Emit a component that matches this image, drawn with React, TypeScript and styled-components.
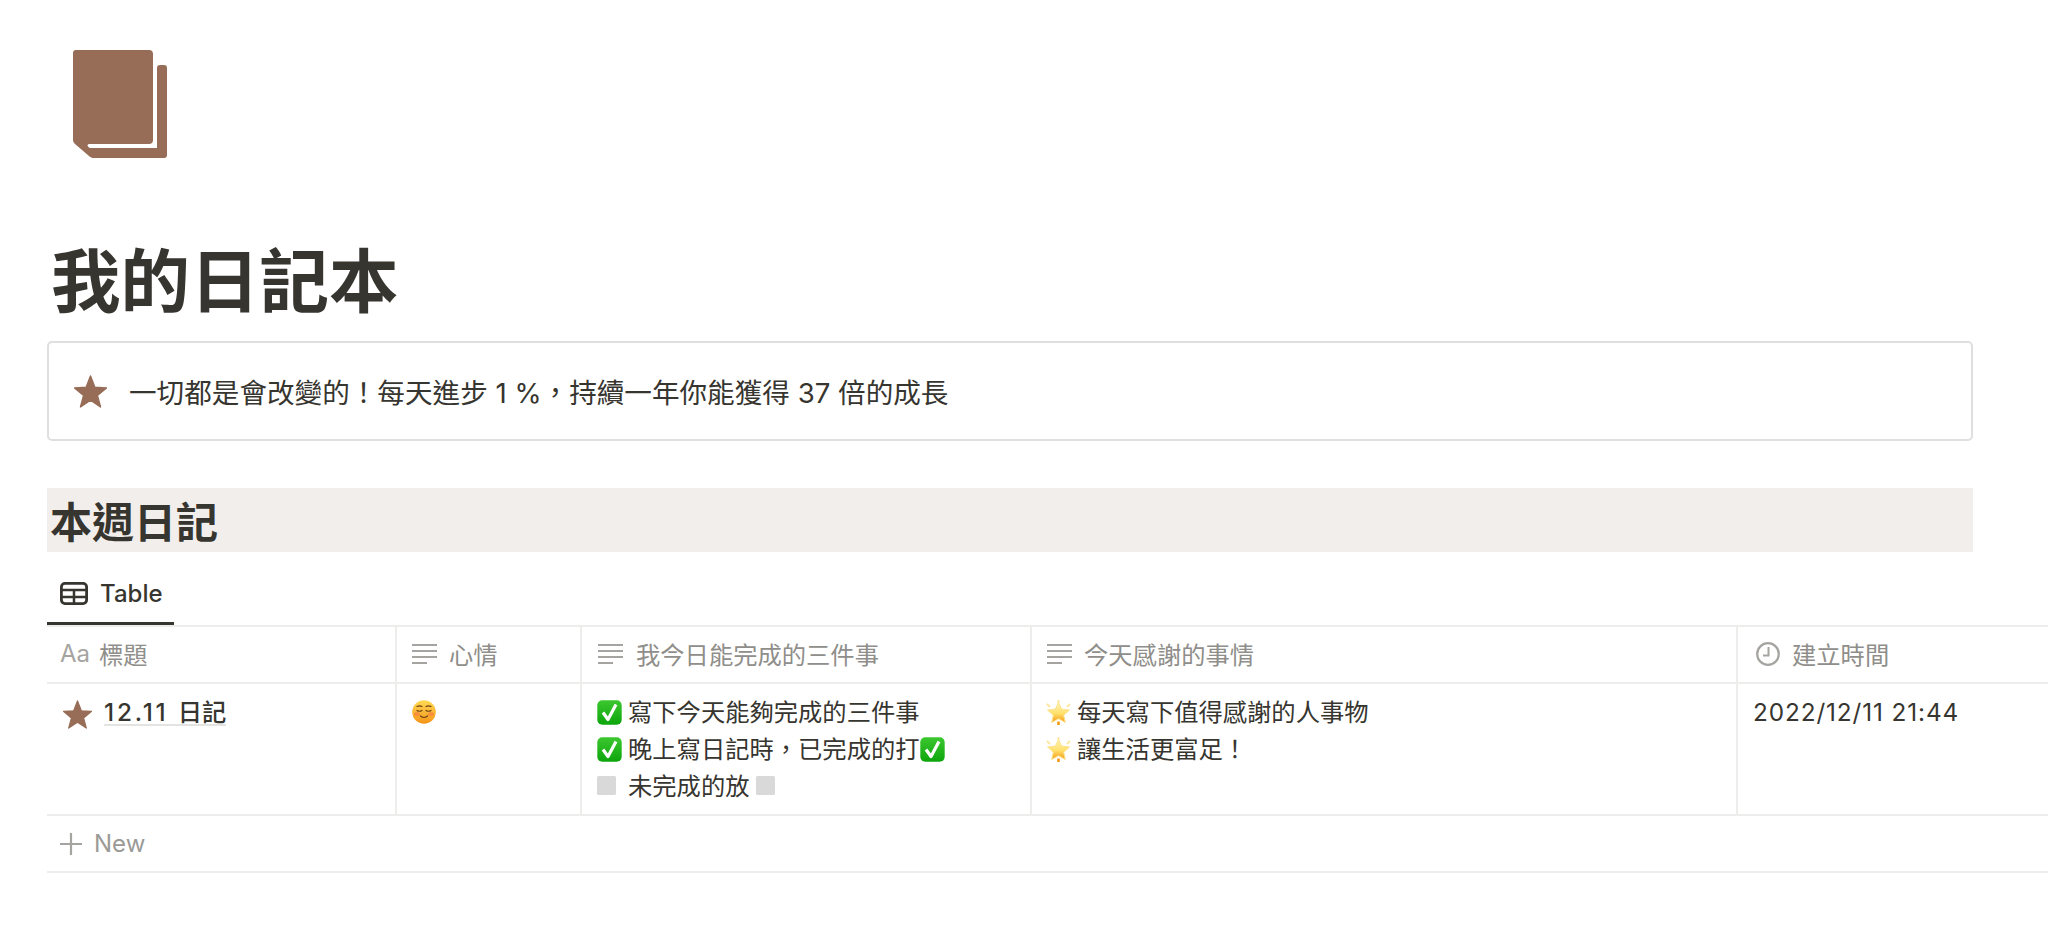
import * as React from 'react';
import styled, { createGlobalStyle } from 'styled-components';

const INK = '#37352f';
const MUTED = '#8f8e8a';
const FAINT = '#a5a4a1';
const RULE = '#ededec';
const BROWN = '#976d57';
const COLUMNS = '350px 185px 450px 706px 1fr';

const GlobalStyle = createGlobalStyle`
  html, body {
    margin: 0;
    padding: 0;
    background: #fff;
    overflow-x: hidden;
  }
  body {
    color: ${INK};
    font-family: Inter, "Noto Sans CJK TC", sans-serif;
  }
`;

const Page = styled.div`
  width: 2048px;
  box-sizing: border-box;
  padding: 50px 75px 0 47px;
`;

const PageIcon = styled.svg`
  display: block;
  width: 94px;
  height: 108px;
  margin-left: 26px;
`;

const Title = styled.h1`
  margin: 71px 0 0 4px;
  font-size: 69.5px;
  line-height: 96px;
  font-weight: 700;
  font-family: "Noto Sans CJK TC", sans-serif;
`;

const Callout = styled.div`
  margin-top: 16px;
  height: 100px;
  box-sizing: border-box;
  border: 2px solid #dfdfdd;
  border-radius: 5px;
  display: flex;
  align-items: center;
  padding: 0 0 0 25px;
  font-size: 27.6px;
  gap: 22px;
`;

const Heading = styled.h2`
  margin: 47px 0 0;
  height: 64px;
  padding-left: 3px;
  background: #f1eeec;
  font-size: 42px;
  line-height: 64px;
  font-weight: 700;
  font-family: "Noto Sans CJK TC", sans-serif;
`;

const Tabs = styled.div`
  display: flex;
  margin-top: 17px;
`;

const Tab = styled.div`
  width: 127px;
  height: 56px;
  box-sizing: border-box;
  padding: 0 0 4px 13px;
  border-bottom: 3px solid ${INK};
  display: flex;
  align-items: center;
  gap: 12px;
  font-size: 24px;
  font-weight: 500;
`;

const Table = styled.div`
  margin-right: -75px;
  border-top: 2px solid ${RULE};
`;

const Row = styled.div<{ $height: number }>`
  display: grid;
  grid-template-columns: ${COLUMNS};
  height: ${(p) => p.$height}px;
  box-sizing: border-box;
  border-bottom: 2px solid ${RULE};
`;

const HeaderCell = styled.div<{ $pad?: number; $gap?: number }>`
  display: flex;
  align-items: center;
  gap: ${(p) => p.$gap ?? 12}px;
  padding-left: ${(p) => p.$pad ?? 15}px;
  padding-bottom: 2px;
  border-right: 2px solid ${RULE};
  color: ${MUTED};
  font-size: 24.3px;
  &:last-child {
    border-right: 0;
  }
`;

const TypeGlyph = styled.span`
  color: ${FAINT};
  font-size: 24px;
`;

const Cell = styled.div<{ $pad?: number }>`
  padding: 10px 0 0 ${(p) => p.$pad ?? 15}px;
  border-right: 2px solid ${RULE};
  font-size: 24.3px;
  line-height: 36.75px;
  &:last-child {
    border-right: 0;
  }
`;

const Line = styled.div`
  display: flex;
  align-items: center;
  height: 36.75px;
`;

const NameCell = styled(Cell)`
  display: flex;
  align-items: flex-start;
  gap: 12px;
  padding-left: 16px;
`;

const StarSlot = styled.span`
  margin-top: 6px;
`;

const PageName = styled.span`
  font-weight: 500;
  height: 24px;
  line-height: 24px;
  margin-top: 6px;
  border-bottom: 2px solid #e3e3e2;
`;

const Digits = styled.span`
  letter-spacing: 2.8px;
`;

const DateText = styled.span`
  letter-spacing: 0.9px;
`;

const Lead = styled.span`
  width: 31px;
  flex: none;
  display: flex;
  align-items: center;
`;

const NewRow = styled.div`
  height: 57px;
  box-sizing: border-box;
  border-bottom: 2px solid ${RULE};
  display: flex;
  align-items: center;
  gap: 12px;
  padding-left: 13px;
  color: #9b9a97;
  font-size: 24px;
`;

const Glyph = styled.svg<{ $w: number; $h?: number }>`
  display: block;
  flex: none;
  width: ${(p) => p.$w}px;
  height: ${(p) => p.$h ?? p.$w}px;
`;

const Star = ({ size }: { size: number }) => (
  <Glyph $w={size} viewBox="0 0 32 32">
    <path
      fill={BROWN}
      stroke={BROWN}
      strokeWidth="1.4"
      strokeLinejoin="round"
      d="M16 1l4.200 10.900 11.300.6-8.800 7.300 3 11.200L16 24.500l-9.700 6.500 3-11.200L.5 12.500l11.300-.6z"
    />
  </Glyph>
);

const LinesIcon = () => (
  <Glyph $w={25} $h={21} viewBox="0 0 25 21">
    <path stroke={FAINT} strokeWidth="2.2" d="M0 2h25M0 8h25M0 14h25M0 20h15" />
  </Glyph>
);

const ClockIcon = () => (
  <Glyph $w={24} viewBox="0 0 24 24">
    <circle cx="12" cy="12" r="10.800" fill="none" stroke={FAINT} strokeWidth="2.200" />
    <path d="M12.500 5v8.500H7" fill="none" stroke={FAINT} strokeWidth="2" />
  </Glyph>
);

const TableIcon = () => (
  <Glyph $w={28} $h={23} viewBox="0 0 28 23">
    <rect x="1.400" y="1.400" width="25.200" height="20.200" rx="3.500" fill="none" stroke={INK} strokeWidth="2.800" />
    <path d="M1 8h26M1 15h26M14 8v14" stroke={INK} strokeWidth="2.500" />
  </Glyph>
);

const PlusIcon = () => (
  <Glyph $w={22} viewBox="0 0 22 22">
    <path d="M0 11h22M11 0v22" stroke={FAINT} strokeWidth="2.200" />
  </Glyph>
);

const CheckEmoji = () => (
  <Glyph $w={25} viewBox="0 0 25 25" role="img" aria-label="✅">
    <defs>
      <linearGradient id="checkFill" x1="0" y1="0" x2="0" y2="1">
        <stop offset="0" stopColor="#3cc730" />
        <stop offset="1" stopColor="#0da50c" />
      </linearGradient>
    </defs>
    <rect x="0.300" y="0.300" width="24.400" height="24.400" rx="5" fill="url(#checkFill)" />
    <path d="M6 12.500l5 7 8-15" fill="none" stroke="#fff" strokeWidth="3.200" strokeLinejoin="round" />
  </Glyph>
);

const GraySquare = () => (
  <Glyph $w={19} viewBox="0 0 19 19" role="img" aria-label="◽">
    <rect width="19" height="19" rx="1.500" fill="#d9d9d9" />
  </Glyph>
);

const GlowStar = () => (
  <Glyph $w={25} viewBox="0 0 25 25" role="img" aria-label="🌟">
    <defs>
      <linearGradient id="starFill" x1="0" y1="0" x2="0" y2="1">
        <stop offset="0" stopColor="#fff4b8" />
        <stop offset="0.550" stopColor="#ffe06a" />
        <stop offset="1" stopColor="#f79a14" />
      </linearGradient>
    </defs>
    <path d="M12.500 0v3M1 4l3 3M24 4l-3 3" stroke="#fde7a0" strokeWidth="2" />
    <path d="M12.500 21.500v3.500" stroke="#f59a12" strokeWidth="2.600" />
    <path
      fill="url(#starFill)"
      stroke="#fde38a"
      strokeWidth="1"
      strokeLinejoin="round"
      d="M12.500 2.500l3.100 6.600 7.900.9-5.800 5.200 1.600 7.300-6.800-3.800-6.800 3.800 1.600-7.300L1.500 10l7.900-.9z"
    />
  </Glyph>
);

const SmileEmoji = () => (
  <Glyph $w={24} viewBox="0 0 24 24" role="img" aria-label="☺️">
    <defs>
      <linearGradient id="face" x1="0" y1="0" x2="0" y2="1">
        <stop offset="0" stopColor="#ffdb55" />
        <stop offset="1" stopColor="#f59318" />
      </linearGradient>
    </defs>
    <circle cx="12" cy="12" r="11.800" fill="url(#face)" />
    <ellipse cx="5" cy="14" rx="3" ry="2" fill="#f4743f" opacity=".55" />
    <ellipse cx="19" cy="14" rx="3" ry="2" fill="#f4743f" opacity=".55" />
    <path
      d="M5 6.500q2.500-1.200 5 0M14 6.500q2.500-1.200 5 0M5 10.500q2.500 1.500 5 0M14 10.500q2.500 1.500 5 0M8.500 16q3.500 3 7 0"
      fill="none"
      stroke="#6e4316"
      strokeWidth="1.200"
      strokeLinecap="round"
    />
  </Glyph>
);

const App: React.FC = () => (
  <>
    <GlobalStyle />
    <Page>
      <PageIcon viewBox="0 0 94 108">
        <path
          fill={BROWN}
          d="M3 0H76a4 4 0 0 1 4 4V90a4 4 0 0 1-4 4H16c-1.500 0-1.800 1.500-1 2.500.6.9 1.400 1.500 2.500 1.500H84V18a3 3 0 0 1 3-3h4a3 3 0 0 1 3 3V105a3 3 0 0 1-3 3H21c-2 0-3.500-.6-5-2L2 94c-1.300-1.200-2-2.500-2-4V3a3 3 0 0 1 3-3z"
        />
      </PageIcon>
      <Title>我的日記本</Title>
      <Callout>
        <Star size={33} />
        <span>一切都是會改變的！每天進步 1 %，持續一年你能獲得 37 倍的成長</span>
      </Callout>
      <Heading>本週日記</Heading>
      <Tabs>
        <Tab>
          <TableIcon />
          Table
        </Tab>
      </Tabs>
      <Table>
        <Row $height={57}>
          <HeaderCell $pad={13} $gap={9}>
            <TypeGlyph>Aa</TypeGlyph>
            標題
          </HeaderCell>
          <HeaderCell>
            <LinesIcon />
            心情
          </HeaderCell>
          <HeaderCell $pad={16} $gap={13}>
            <LinesIcon />
            我今日能完成的三件事
          </HeaderCell>
          <HeaderCell>
            <LinesIcon />
            今天感謝的事情
          </HeaderCell>
          <HeaderCell $pad={18}>
            <ClockIcon />
            建立時間
          </HeaderCell>
        </Row>
        <Row $height={132}>
          <NameCell>
            <StarSlot>
              <Star size={29} />
            </StarSlot>
            <PageName>
              <Digits>12.11 </Digits>日記
            </PageName>
          </NameCell>
          <Cell>
            <Line>
              <SmileEmoji />
            </Line>
          </Cell>
          <Cell>
            <Line>
              <Lead>
                <CheckEmoji />
              </Lead>
              寫下今天能夠完成的三件事
            </Line>
            <Line>
              <Lead>
                <CheckEmoji />
              </Lead>
              晚上寫日記時，已完成的打
              <CheckEmoji />
            </Line>
            <Line>
              <Lead>
                <GraySquare />
              </Lead>
              未完成的放&nbsp;
              <GraySquare />
            </Line>
          </Cell>
          <Cell $pad={14}>
            <Line>
              <Lead>
                <GlowStar />
              </Lead>
              每天寫下值得感謝的人事物
            </Line>
            <Line>
              <Lead>
                <GlowStar />
              </Lead>
              讓生活更富足！
            </Line>
          </Cell>
          <Cell>
            <DateText>2022/12/11 21:44</DateText>
          </Cell>
        </Row>
        <NewRow>
          <PlusIcon />
          New
        </NewRow>
      </Table>
    </Page>
  </>
);

export default App;
